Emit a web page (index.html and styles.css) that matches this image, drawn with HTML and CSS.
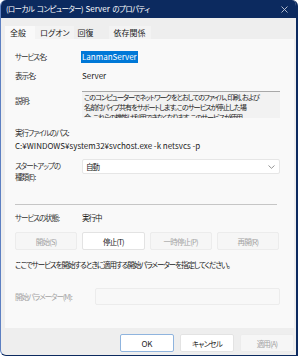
FILE: index.html
```html
<!DOCTYPE html>
<html lang="ja">
<head>
    <meta charset="UTF-8">
    <title>(ローカル コンピューター) Server のプロパティ</title>
    <link rel="stylesheet" href="styles.css">
</head>
<body>

    <div class="window">
        <div class="titlebar">
            <span class="title">(ローカル コンピューター) <span class="latin">Server</span> のプロパティ</span>
            <svg class="close" width="7" height="7" viewBox="0 0 7 7">
                <path d="M0.5 0.5 L6.5 6.5 M6.5 0.5 L0.5 6.5" stroke="#c3cad8" stroke-width="0.9" fill="none"/>
            </svg>
        </div>

        <!-- Tabs -->
        <div class="tabs">
            <div class="tab active">全般</div>
            <div class="tab">ログオン</div>
            <div class="tab">回復</div>
            <div class="tab">依存関係</div>
        </div>

        <div class="panel">
            <div class="row row-name">
                <span class="label">サービス名:</span>
                <span class="selected latin">LanmanServer</span>
            </div>
            <div class="row row-display">
                <span class="label">表示名:</span>
                <span class="latin">Server</span>
            </div>
            <div class="row row-desc">
                <span class="label">説明:</span>
                <div class="desc-box">このコンピューターでネットワークをとおしてのファイル、印刷、および<br>名前付パイプ共有をサポートします。このサービスが停止した場<br>合、これらの機能は利用できなくなります。このサービスが使用</div>
            </div>
            <div class="path-label">実行ファイルのパス:</div>
            <div class="path latin">C:¥WINDOWS¥system32¥svchost.exe -k netsvcs -p</div>
            <div class="row row-startup">
                <span class="label two-line">スタートアップの<br>種類(E):</span>
                <div class="select">
                    <span>自動</span>
                    <svg width="7" height="4" viewBox="0 0 7 4">
                        <path d="M0.5 0.5 L3.5 3.3 L6.5 0.5" stroke="#7a7a7a" stroke-width="0.8" fill="none"/>
                    </svg>
                </div>
            </div>

            <div class="separator"></div>

            <div class="row row-status">
                <span class="label">サービスの状態:</span>
                <span>実行中</span>
            </div>
            <div class="svc-buttons">
                <button class="btn" disabled>開始(S)</button>
                <button class="btn">停止(T)</button>
                <button class="btn" disabled>一時停止(P)</button>
                <button class="btn" disabled>再開(R)</button>
            </div>
            <p class="hint">ここでサービスを開始するときに適用する開始パラメーターを指定してください。</p>
            <div class="row row-param">
                <span class="label disabled-text">開始パラメーター(M):</span>
                <div class="param-input"></div>
            </div>
        </div>

        <div class="footer">
            <button class="btn default"><span class="latin">OK</span></button>
            <button class="btn">キャンセル</button>
            <button class="btn" disabled>適用(A)</button>
        </div>
    </div>

</body>
</html>
```

FILE: styles.css
```css
* {
    box-sizing: border-box;
}
body {
    margin: 0;
    background-color: #ffffff;
    font-family: "Noto Sans CJK JP", "Noto Sans", sans-serif;
    font-size: 7.5px;
    letter-spacing: -1.05px;
    font-feature-settings: "palt";
    color: #1b1b1b;
}
.latin {
    font-size: 8px;
    letter-spacing: 0;
}
.window {
    width: 298px;
    height: 356px;
    display: flex;
    flex-direction: column;
    background-color: #eeeeee;
    border-left: 1px solid #5d80c2;
    border-right: 2px solid #0c2a5f;
    border-bottom: 1px solid #0c2a5f;
    border-radius: 6px 6px 0 6px;
    overflow: hidden;
}
.titlebar {
    height: 18px;
    flex-shrink: 0;
    background-color: #0c2a5f;
    color: #ffffff;
    display: flex;
    align-items: center;
    justify-content: space-between;
    padding: 0 8px 0 5px;
}
.title {
    line-height: 1;
    letter-spacing: -0.6px;
    word-spacing: 1.5px;
}
.close {
    display: block;
}

/* Tabs */
.tabs {
    display: flex;
    margin: 8px 0 0 4px;
    height: 13px;
    font-size: 8px;
    letter-spacing: 0;
}
.tab {
    line-height: 13px;
    color: #1b1b1b;
}
.tab.active {
    background-color: #f9f9f9;
    width: 30px;
    padding-left: 5px;
}
.tab:nth-child(2) {
    padding: 0 4px 0 5px;
    background-color: #f3f3f3;
}
.tab:nth-child(3) {
    padding: 0 15px 0 4px;
}
.tab:nth-child(4) {
    padding: 0 5px;
    background-color: #f3f3f3;
}

/* Main panel */
.panel {
    margin: 0 2px 0 4px;
    height: 289px;
    background-color: #f9f9f9;
    padding: 12px 14px 0 10px;
}
.row {
    display: flex;
    align-items: flex-start;
    line-height: 12px;
}
.label {
    width: 67px;
    flex-shrink: 0;
    color: #333333;
}
.selected {
    background-color: #0078d7;
    color: #ffffff;
    padding: 0 1px;
    margin-left: -1px;
}
.row-display {
    margin-top: 7px;
}
.row-desc {
    margin-top: 9px;
}
.row-desc .label {
    padding-top: 4px;
}
.desc-box {
    flex: 1;
    height: 27px;
    overflow: hidden;
    white-space: nowrap;
    background-color: #f2f2f2;
    border-top: 1px solid #a8a8a8;
    padding: 0 4px 0 2px;
    font-size: 7.2px;
    line-height: 10px;
}
.path-label {
    margin-top: 9px;
    line-height: 12px;
    color: #333333;
}
.path {
    margin-top: 1px;
    line-height: 12px;
}
.row-startup {
    margin-top: 7px;
}
.two-line {
    line-height: 11px;
    padding-top: 1px;
}
.select {
    flex: 1;
    height: 15px;
    background-color: #ffffff;
    border: 1px solid #e6e6e6;
    border-radius: 2px;
    display: flex;
    align-items: center;
    justify-content: space-between;
    padding: 0 4px 0 3px;
}
.separator {
    margin: 22px 3px 0 0;
    height: 1px;
    background-color: #c6c6c6;
}
.row-status {
    margin-top: 7px;
}
.svc-buttons {
    display: grid;
    grid-template-columns: repeat(4, 1fr);
    gap: 5px;
    margin-top: 8px;
    margin-right: 1px;
}
.btn {
    font-family: inherit;
    font-size: 7.5px;
    letter-spacing: -0.8px;
    font-feature-settings: "palt";
    height: 18px;
    padding: 0;
    background-color: #ffffff;
    border: 1px solid #e3e3e3;
    border-radius: 2px;
    color: #1b1b1b;
}
.btn:disabled {
    background-color: #f6f6f6;
    border-color: #ececec;
    color: #a3a3a3;
}
.hint {
    margin: 9px 0 0;
    line-height: 12px;
}
.row-param {
    margin-top: 17px;
    align-items: center;
}
.row-param .label {
    width: 80px;
}
.disabled-text {
    color: #a3a3a3;
}
.param-input {
    flex: 1;
    height: 17px;
    background-color: #f8f8f8;
    border: 1px solid #ececec;
    border-radius: 2px;
}

/* Dialog buttons */
.footer {
    display: flex;
    justify-content: flex-end;
    gap: 6px;
    margin-top: 6px;
    padding-right: 2px;
}
.footer .btn {
    width: 54px;
    height: 18px;
}
.footer .btn.default {
    border-color: #8fb4de;
}
```
